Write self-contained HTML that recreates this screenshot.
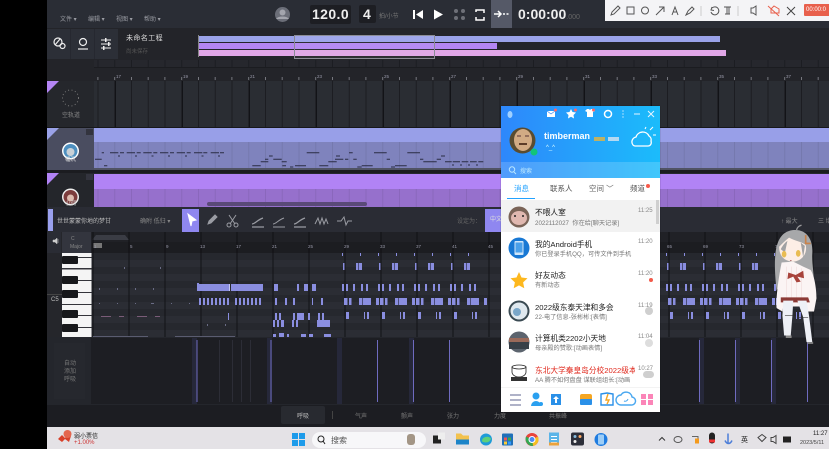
<!DOCTYPE html>
<html><head><meta charset="utf-8"><style>
html,body{margin:0;padding:0;background:#000}
#p{position:relative;width:829px;height:449px;overflow:hidden;background:#000;font-family:"Liberation Sans","Noto Sans CJK SC",sans-serif;color:#aaa;filter:blur(.35px)}
.a{position:absolute;white-space:nowrap}
svg{position:absolute;overflow:visible}
.m{font-size:6px;color:#9a9ca3;top:14px}
.q{position:absolute;left:34px;font-size:7.700px;color:#222;white-space:nowrap}
.s{position:absolute;left:34px;font-size:6.200px;color:#777;white-space:nowrap}
.t{position:absolute;left:137px;font-size:6px;color:#888}
.r{font-size:4.500px;color:#99a;top:244px}
</style></head><body><div id="p">
<div class="a" style="left:47px;top:0;width:782px;height:28px;background:#2a2d35"></div>
<div class="a m" style="left:60px">文件 ▾</div><div class="a m" style="left:88px">编辑 ▾</div><div class="a m" style="left:116px">视图 ▾</div><div class="a m" style="left:144px">帮助 ▾</div>
<svg style="left:0;top:0" width="829" height="28"><circle cx="282.500" cy="14.500" r="7.500" fill="#6b6e78"/><circle cx="282.500" cy="12.500" r="3" fill="#a3a5ad"/><path d="M276 19a7 4 0 0 1 13 0z" fill="#a3a5ad"/>
<rect x="310" y="5" width="41" height="19" rx="2" fill="#1d1e23"/><rect x="359" y="5" width="17" height="18" rx="2" fill="#1d1e23"/><rect x="491" y="0" width="21" height="28" fill="#555967"/>
<path d="M413 10h2v9h-2zM423 10v9l-7-4.500z" fill="#fff"/><path d="M434 9.500l9 5-9 5z" fill="#fff"/>
<g fill="#6e7078"><circle cx="456" cy="11" r="2"/><circle cx="463" cy="11" r="2"/><circle cx="456" cy="18" r="2"/><circle cx="463" cy="18" r="2"/></g>
<path d="M476 12v-2h8v3M484 17v3h-8v-3" fill="none" stroke="#fff" stroke-width="1.500"/><path d="M494 14h6M498 11l3 3-3 3" fill="none" stroke="#fff" stroke-width="1.500"/><path d="M503 14h6" stroke="#fff" stroke-width="1.500" stroke-dasharray="2 1.500"/></svg>
<div class="a" style="left:312px;top:6px;font-size:14px;font-weight:bold;color:#eee;letter-spacing:.4px">120.0</div>
<div class="a" style="left:363px;top:6px;font-size:14px;font-weight:bold;color:#eee">4</div>
<div class="a" style="left:379px;top:11px;font-size:6px;color:#777">拍/小节</div>
<div class="a" style="left:518px;top:6px;font-size:14px;font-weight:bold;color:#eee">0:00:00<span style="font-size:7px;font-weight:normal;color:#666">.000</span></div>

<div class="a" style="left:605px;top:0;width:224px;height:21px;background:#f4f4f6"></div>
<svg style="left:605px;top:0" width="224" height="21" fill="none" stroke="#555" stroke-width="1"><path d="M6 15l1-3 6-6 2 2-6 6z"/><rect x="22" y="7" width="7" height="7"/><circle cx="40" cy="10.500" r="3.500"/><path d="M51 15l8-8M54 7h5v5"/><path d="M67 15l3-8 3 8M68.500 12h3"/><path d="M81 15l2-4 4-4 2 2-4 4z"/><path d="M107 7l-1 3 3 .5M107 8a4 4 0 1 1-1 4"/><path d="M119 7h7M120 14h5M122 7v7M124 7v7"/><path d="M96 6v10M133 6v10" stroke="#ccc"/><path d="M146 8h2l3-2v9l-3-2h-2z"/><path d="M169 6l-3 3v4h8V9zM163 6l11 10" stroke="#e8604c"/><path d="M182 7l8 8M190 7l-8 8" stroke="#444"/></svg>
<div class="a" style="left:804px;top:4px;width:25px;height:12px;background:#e8604c;color:#fff;font-size:6px;line-height:12px;padding-left:2px;border-radius:1px 0 0 1px">00:00:0</div>

<div class="a" style="left:47px;top:28px;width:782px;height:32px;background:#232429"></div>
<div class="a" style="left:47px;top:29px;width:71px;height:30px;background:#2c2f37"></div>
<svg style="left:47px;top:29px" width="71" height="30"><path d="M23.500 0v30M47.500 0v30" stroke="#262830"/>
<g fill="none" stroke="#eee" stroke-width="1.200"><circle cx="11" cy="13" r="4"/><circle cx="15.500" cy="17" r="2.500"/><path d="M8 16l5-6"/><circle cx="36" cy="13" r="3.500"/><path d="M31 20h10"/><path d="M54 11h10M54 15h10M54 19h10" stroke-width="1"/></g><g fill="#eee"><rect x="58" y="9" width="1.500" height="4"/><rect x="61" y="13" width="1.500" height="4"/><rect x="56" y="17" width="1.500" height="4"/></g></svg>
<div class="a" style="left:126px;top:33px;font-size:7px;color:#ddd;letter-spacing:.4px">未命名工程</div>
<div class="a" style="left:126px;top:47px;font-size:5.500px;color:#555">尚未保存</div>
<div class="a" style="left:198px;top:36px;width:522px;height:6px;background:#9aa2e8"></div>
<div class="a" style="left:198px;top:43px;width:299px;height:6px;background:#b386f2"></div>
<div class="a" style="left:198px;top:50px;width:528px;height:6px;background:#e0a6e6"></div>
<div class="a" style="left:294px;top:35px;width:139px;height:22px;border:1px solid #8b8c96;background:rgba(255,255,255,.05)"></div>
<div class="a" style="left:198px;top:35px;width:1px;height:22px;background:#888"></div>

<svg style="left:47px;top:60px" width="782" height="148">
<defs>
<pattern id="g" x="50.500" y="0" width="16.750" height="200" patternUnits="userSpaceOnUse"><rect x="0" width="1" height="200" fill="#1c1d22"/></pattern>
<pattern id="gb" x="1" y="0" width="67" height="200" patternUnits="userSpaceOnUse"><rect width="1" height="200" fill="#121317"/></pattern>
<pattern id="gl" x="50.500" y="0" width="16.750" height="200" patternUnits="userSpaceOnUse"><rect width="1" height="200" fill="#000" opacity=".08"/></pattern>
<pattern id="tk" x="50.500" y="0" width="16.750" height="3" patternUnits="userSpaceOnUse"><rect width=".8" height="3" fill="#8a8b92"/></pattern>
</defs>
<rect width="782" height="8" fill="#26272d"/><rect y="8" width="782" height="13" fill="#232429"/><rect x="47" y="7" width="735" height="1" fill="#1b1c20"/><rect width="47" height="21" fill="#232429"/>
<rect x="47" y="0" width="735" height="7" fill="url(#g)"/>
<rect x="47" y="17" width="735" height="3" fill="url(#tk)"/>
<rect y="21" width="782" height="107" fill="#26292f"/><rect x="47" y="21" width="735" height="46" fill="#2a2d33"/>
<rect x="50" y="21" width="732" height="46" fill="url(#g)"/><rect x="47" y="21" width="735" height="46" fill="url(#gb)"/>
<rect x="0" y="21" width="47" height="46" fill="#25272c"/>
<path d="M0 21h12L0 33z" fill="#b485f5"/>
<circle cx="23.500" cy="38" r="8" fill="none" stroke="#777" stroke-dasharray="1 2.500"/>
<rect y="67" width="782" height="3" fill="#17181b"/>
<rect y="68" width="47" height="45" fill="#4a4d60"/><path d="M0 68h12L0 80z" fill="#9aa2e8"/>
<rect x="47" y="68" width="735" height="14" fill="#989fe8"/><rect x="47" y="82" width="735" height="26" fill="#7f83bd"/><rect x="47" y="82" width="735" height="26" fill="url(#gl)"/>
<rect x="47" y="108" width="735" height="2" fill="#505363"/>
<rect y="110" width="782" height="3" fill="#1b1c20"/>
<rect y="113" width="47" height="35" fill="#24262b"/><path d="M0 113h12L0 125z" fill="#b183f5"/>
<rect x="47" y="114" width="735" height="15" fill="#b183f5"/><rect x="47" y="129" width="735" height="19" fill="#9670cc"/><rect x="47" y="129" width="735" height="19" fill="url(#gl)"/>
<rect x="160" y="142" width="160" height="4" rx="2" fill="#5a4a78"/>
<rect x="39" y="69" width="7" height="6" fill="#33343e"/><rect x="39" y="114" width="7" height="6" fill="#33343e"/>
<circle cx="23.500" cy="91" r="8.500" fill="#fff"/><circle cx="23.500" cy="91" r="7" fill="#4e8fbf"/><circle cx="23.500" cy="92" r="4" fill="#c9d0d6"/>
<circle cx="23.500" cy="137" r="8.500" fill="#eee"/><circle cx="23.500" cy="137" r="7" fill="#7c3c3c"/><circle cx="23.500" cy="138" r="3.500" fill="#dcbcb0"/>
<path stroke="#2a2c44" stroke-width="1" fill="none" d="M54.700 92.700H57M63 92.700H71.300M73 92.700H77M79.700 92.700H88M89.700 92.700H93.700M96.300 92.700H104.700M106.300 92.700H110.300M113 92.700H121.300M123 92.700H127M129.700 92.700H138M139.700 92.700H143.700M147 92.700H155.300M156.300 92.700H160.300M163.700 92.700H172M173 92.700H177M259.700 92.700H272.300M302 92.700H305.700M327 92.700H339.700M360.300 92.700H373
M71 96H73M88 96H90M104.500 96H106.500M121 96H123M138 96H140M154.500 96H156.500M171 96H173M222 96H225.700M289 96H293M394 96H398
M48 99.300H54.700M218 99.300H221.300M226.300 99.300H234.700M288 99.300H296.300M298 99.300H301.300M306.300 99.300H309.700M339.700 99.300H343M373 99.300H376.300M389.700 99.300H394
M213.700 101.700H221.300M234.700 101.700H239.700M281.300 101.700H289.700M376.300 101.700H389.700M398 101.700H404.700M405.700 101.700H413M414.700 101.700H421.300M423 101.700H429.700M431.300 101.700H436.300
M57 105.700H60.300M205.300 105.700H213.700M235.300 105.700H239M248 105.700H259M272.300 105.700H281.300M314.700 105.700H325.700M348 105.700H359.700M405 105H407M413 105H415M421 105H423M429 105H431
M243 107H246.300M310.300 107H314.700M344 107H348"/>
</svg>
<div class="a" style="left:62px;top:110px;font-size:6px;color:#888">空轨道</div>
<div class="a" style="left:65px;top:155px;font-size:5.500px;color:#ddd">幅沉</div>
<div class="a" style="left:65px;top:202px;font-size:5.500px;color:#ccc;line-height:5px">小调</div>
<div class="a r" style="left:116px;top:74px">17</div><div class="a r" style="left:183px;top:74px">19</div><div class="a r" style="left:250px;top:74px">21</div><div class="a r" style="left:317px;top:74px">23</div><div class="a r" style="left:384px;top:74px">25</div><div class="a r" style="left:451px;top:74px">27</div><div class="a r" style="left:518px;top:74px">29</div><div class="a r" style="left:585px;top:74px">31</div><div class="a r" style="left:652px;top:74px">33</div><div class="a r" style="left:719px;top:74px">35</div><div class="a r" style="left:786px;top:74px">37</div>

<!-- Toolbar -->
<div class="a" style="left:47px;top:207px;width:782px;height:25px;background:#2a2c34"></div>
<div class="a" style="left:48px;top:209px;width:5px;height:22px;background:#9aa0ee"></div>
<div class="a" style="left:57px;top:216px;font-size:6px;color:#bbb">世世蒙蒙你地的梦甘</div>
<div class="a" style="left:140px;top:216px;font-size:6px;color:#888">确附 低归 ▾</div>
<div class="a" style="left:182px;top:209px;width:17px;height:23px;background:#8f87f0"></div>
<svg style="left:180px;top:207px" width="180" height="25" fill="none" stroke="#9a9ca3" stroke-width="1"><path d="M8 7l8 6-4 1-1 5z" fill="#fff" stroke="#fff"/><path d="M28 17l1-3 6-6 2 2-6 6z" fill="#9a9ca3"/><path d="M49 8l6 9M56 8l-6 9"/><circle cx="49" cy="18" r="2"/><circle cx="56" cy="18" r="2"/><path d="M72 17c3 0 5-4 11-6M72 20h12" stroke-width="1.200"/><path d="M93 17c3 0 5-4 11-6M93 20h12"/><path d="M114 17c3 0 5-4 11-6M114 20h12" stroke-width="1.200"/><path d="M135 17l3-6 2 6 2-6 2 6 2-5 2 5"/><path d="M157 14h4l3-4 2 8 2-4h4"/></svg>
<div class="a" style="left:457px;top:216px;font-size:6px;color:#666">设定为：</div>
<div class="a" style="left:485px;top:209px;width:30px;height:23px;background:#8f87f0;color:#ddd;font-size:6px;line-height:23px;padding-left:5px">中文</div>
<div class="a" style="left:781px;top:216px;font-size:6px;color:#888">↑ 最大</div><div class="a" style="left:818px;top:216px;font-size:6px;color:#888">三 增</div>

<!-- Piano roll -->
<svg style="left:47px;top:232px" width="782" height="106">
<defs>
<pattern id="rows" x="0" y="0" width="10" height="28" patternUnits="userSpaceOnUse"><rect width="10" height="28" fill="#26282e"/><rect y="0" width="10" height="7" fill="#2b2d34"/><rect y="14" width="10" height="7" fill="#2b2d34"/></pattern>
<pattern id="bars" x="45.500" y="0" width="36" height="106" patternUnits="userSpaceOnUse"><rect width="1" height="106" fill="#0d0e11"/></pattern>
<g id="ph" fill="#8a8ee0">
<rect x="0" y="21" width="1" height="3"/><rect x="18" y="21" width="1" height="3"/>
<rect x="1" y="31" width="1.500" height="7"/><rect x="14" y="31" width="6" height="7"/><rect x="16" y="31" width="1" height="7" fill="#4a4c78"/>
<rect x="0" y="52" width="2" height="7"/><rect x="4" y="52" width="2" height="7"/><rect x="11" y="52" width="2" height="7"/><rect x="19" y="52" width="2" height="7"/><rect x="24" y="52" width="2" height="7"/>
<rect x="2" y="66" width="3.500" height="7"/><rect x="7" y="66" width="2.500" height="7"/><rect x="17" y="66" width="12" height="7"/><rect x="20" y="66" width="1" height="7" fill="#4a4c78"/><rect x="34" y="66" width="3" height="7"/>
<rect x="4" y="80" width="3" height="7"/><rect x="25" y="80" width="2" height="7"/><rect x="22" y="80" width="1" height="7"/>
</g>
</defs>
<rect width="782" height="106" fill="#1e1f24"/>
<rect x="44" y="0" width="738" height="10" fill="#202126"/><rect x="45" y="10" width="737" height="11" fill="#1c1d21"/>
<path d="M45 8l4-5h29l4 5z" fill="#3a3c44"/>
<rect x="0" y="0" width="15" height="106" fill="#25262b"/>
<rect x="15" y="0" width="29" height="21" fill="#33353e"/>
<rect x="0" y="0" width="14" height="21" fill="#2a2c34"/>
<rect x="46" y="11" width="9" height="5" fill="#777"/>
<path d="M6 8h2l2-2v6l-2-2H6zM11 7v4" fill="#ccc" stroke="#ccc" stroke-width=".5"/>
<rect x="44" y="21" width="738" height="85" fill="url(#rows)"/>
<rect x="45" y="0" width="737" height="106" fill="url(#bars)" opacity=".85"/>
<rect x="0" y="62" width="15" height="1" fill="#444"/>
<g fill="#8a8ee0">
<rect x="150" y="51" width="2" height="8"/><rect x="150" y="52" width="32" height="7"/><rect x="182" y="52" width="1" height="7" fill="#c5c8f2"/><rect x="184" y="52" width="32" height="7"/>
<rect x="152" y="66" width="2" height="7"/><rect x="156" y="66" width="2" height="7"/><rect x="160" y="66" width="2" height="7"/><rect x="164" y="66" width="2" height="7"/><rect x="168" y="66" width="2" height="7"/><rect x="172" y="66" width="2" height="7"/><rect x="176" y="66" width="2" height="7"/><rect x="180" y="66" width="2" height="7"/><rect x="188" y="66" width="2" height="7"/><rect x="192" y="66" width="2" height="7"/><rect x="196" y="66" width="2" height="7"/><rect x="200" y="66" width="2" height="7"/><rect x="204" y="66" width="2" height="7"/><rect x="208" y="66" width="2" height="7"/><rect x="212" y="66" width="2" height="7"/>
<rect x="181" y="81" width="1" height="7"/>
<rect x="227" y="52" width="4" height="7"/><rect x="250" y="52" width="2" height="7"/><rect x="257" y="52" width="4" height="7"/><rect x="265" y="52" width="4" height="7"/>
<rect x="228" y="66" width="2" height="7"/><rect x="238" y="66" width="2" height="7"/><rect x="246" y="66" width="2" height="7"/><rect x="265" y="66" width="1" height="7"/><rect x="274" y="66" width="2" height="7"/>
<rect x="228" y="81" width="2" height="7"/><rect x="232" y="81" width="2" height="7"/><rect x="246" y="81" width="2" height="7"/><rect x="250" y="81" width="7" height="7"/><rect x="261" y="81" width="2" height="7"/><rect x="271" y="81" width="2" height="7"/><rect x="275" y="81" width="2" height="7"/>
<rect x="226" y="88" width="2" height="7"/><rect x="230" y="88" width="2" height="7"/><rect x="234" y="88" width="3" height="7"/><rect x="245" y="88" width="2" height="7"/><rect x="249" y="88" width="2" height="7"/><rect x="271" y="88" width="12" height="7"/><rect x="270" y="88" width="1" height="7"/>
<rect x="226" y="102" width="3" height="4"/><rect x="232" y="101" width="5" height="5"/><rect x="240" y="102" width="2" height="4"/><rect x="254" y="102" width="5" height="4"/><rect x="262" y="102" width="4" height="4"/><rect x="277" y="102" width="7" height="4"/>
</g>
<g fill="#6a6c85"><rect x="77" y="35" width="1" height="2"/><rect x="113" y="35" width="1" height="2"/><rect x="52" y="56" width="1" height="2"/><rect x="70" y="56" width="1" height="2"/><rect x="88" y="56" width="1" height="2"/><rect x="106" y="56" width="1" height="2"/><rect x="52" y="71" width="1" height="1"/><rect x="70" y="71" width="1" height="1"/><rect x="88" y="71" width="1" height="1"/><rect x="104" y="71" width="3" height="1"/><rect x="124" y="71" width="1" height="1"/><rect x="142" y="71" width="1" height="1"/><rect x="160" y="92" width="1" height="2"/><rect x="178" y="92" width="1" height="2"/></g>
<g fill="#7a5c78"><rect x="54" y="84" width="10" height="1"/><rect x="72" y="84" width="5" height="1"/><rect x="90" y="84" width="10" height="1"/><rect x="108" y="84" width="5" height="1"/></g>
<g fill="#5a5c70"><rect x="46" y="104" width="55" height="1"/><rect x="128" y="104" width="60" height="1"/></g>
<use href="#ph" x="295"/><use href="#ph" x="331"/><use href="#ph" x="367"/><use href="#ph" x="403"/>
<use href="#ph" x="619"/><use href="#ph" x="655"/><use href="#ph" x="691"/><use href="#ph" x="727"/>
</svg>
<div class="a" style="left:71px;top:236px;font-size:5px;color:#888">C</div><div class="a" style="left:70px;top:244px;font-size:5px;color:#888">Major</div>
<div class="a r" style="left:94px">1</div><div class="a r" style="left:130px">5</div><div class="a r" style="left:166px">9</div><div class="a r" style="left:200px">13</div><div class="a r" style="left:236px">17</div><div class="a r" style="left:272px">21</div><div class="a r" style="left:308px">25</div><div class="a r" style="left:344px">29</div><div class="a r" style="left:380px">33</div><div class="a r" style="left:416px">37</div><div class="a r" style="left:452px">41</div><div class="a r" style="left:488px">45</div><div class="a r" style="left:667px">65</div><div class="a r" style="left:703px">69</div><div class="a r" style="left:739px">73</div><div class="a r" style="left:775px">77</div>
<div class="a" style="left:51px;top:297px;font-size:6px;color:#bbb">C5</div>

<svg style="left:62px;top:253px" width="30" height="84"><rect width="29.500" height="84" fill="#f4f4f4"/><g fill="#33343a"><rect x="16" y="4" width="13.500" height="1"/><rect y="15" width="29.500" height="1.500"/><rect x="16" y="27" width="13.500" height="1"/><rect x="16" y="39" width="13.500" height="1"/><rect y="51" width="29.500" height="1"/><rect x="16" y="62" width="13.500" height="1"/><rect x="16" y="74" width="13.500" height="1"/></g>
<g fill="#17181b"><rect y="3" width="16" height="8" rx="1"/><rect y="23" width="16" height="8" rx="1"/><rect y="37" width="16" height="8" rx="1"/><rect y="57" width="16" height="8" rx="1"/><rect y="71" width="16" height="8" rx="1"/></g></svg>

<!-- Automation -->
<svg style="left:47px;top:337px" width="782" height="90">
<rect width="782" height="68" fill="#24262c"/><rect x="44" y="1" width="738" height="66" fill="#1d1e23"/>
<g fill="#26283a"><rect x="145" y="1" width="5" height="66"/><rect x="220" y="1" width="5" height="66"/><rect x="290" y="1" width="5" height="66"/><rect x="362" y="1" width="5" height="66"/><rect x="652" y="1" width="5" height="66"/><rect x="688" y="1" width="5" height="66"/><rect x="724" y="1" width="5" height="66"/></g>
<g fill="#6f6bc0"><rect x="149.500" y="3" width="1" height="62"/><rect x="223.500" y="3" width="1" height="62"/><rect x="330" y="3" width="1" height="62"/><rect x="366" y="3" width="1" height="62"/><rect x="402" y="3" width="1" height="62"/><rect x="652" y="3" width="1" height="62"/><rect x="688" y="3" width="1" height="62"/><rect x="724" y="3" width="1" height="62"/><rect x="760" y="3" width="1" height="62"/></g>
<g fill="#2c2d36"><rect x="172" y="3" width="1" height="62"/><rect x="185" y="3" width="1" height="62"/><rect x="194" y="3" width="1" height="62"/><rect x="203" y="3" width="1" height="62"/></g>
<rect x="7" y="6" width="31" height="56" fill="#26282e"/>
<rect y="68" width="782" height="22" fill="#1c1d22"/><rect x="234" y="69" width="44" height="18" rx="2" fill="#282a30"/><rect x="285" y="74" width="1" height="8" fill="#444"/></svg>
<div class="a" style="left:63px;top:360px;width:14px;font-size:6px;line-height:8px;color:#777;white-space:normal;text-align:center">自动添加呼吸</div>
<div class="a" style="left:297px;top:411px;font-size:6px;color:#bbb">呼吸</div><div class="a" style="left:355px;top:411px;font-size:6px;color:#777">气声</div><div class="a" style="left:401px;top:411px;font-size:6px;color:#777">颤声</div><div class="a" style="left:447px;top:411px;font-size:6px;color:#777">张力</div><div class="a" style="left:494px;top:411px;font-size:6px;color:#777">力度</div><div class="a" style="left:549px;top:411px;font-size:6px;color:#777">共振峰</div>

<!-- Taskbar -->
<div class="a" style="left:47px;top:427px;width:782px;height:22px;background:#e4e2e6"></div>
<svg style="left:47px;top:427px" width="782" height="22">
<path d="M11 12l4-4 3 3 3-5 3 3-2 6-4-3-3 3z" fill="#d8402a"/><circle cx="20.500" cy="7" r="4" fill="#e4664e"/>
<g fill="#1d9bea"><rect x="245" y="6" width="6" height="6"/><rect x="252" y="6" width="6" height="6"/><rect x="245" y="13" width="6" height="6"/><rect x="252" y="13" width="6" height="6"/></g>
<rect x="265" y="5" width="114" height="16" rx="8" fill="#f7f7f9"/><circle cx="274" cy="12" r="3" fill="none" stroke="#222"/><path d="M276 14l2 3" stroke="#222"/>
<rect x="360" y="7" width="8" height="11" rx="3" fill="#a39686"/>
<g transform="translate(0,1.500)">
<rect x="386" y="7" width="8" height="8" fill="#222"/><rect x="391" y="4" width="7" height="7" fill="#eee"/>
<path d="M409 5h5l2 2h6v4h-13z" fill="#f2c14e"/><rect x="409" y="10" width="13" height="6" fill="#1d84c8"/><rect x="409" y="9" width="13" height="2" fill="#f2c14e"/>
<circle cx="439" cy="11" r="6" fill="#1f9bd8"/><path d="M435 13a5 4 0 0 1 9-3c-1 4-5 5-9 3z" fill="#5fd07a"/>
<rect x="455" y="5" width="11" height="12" rx="1" fill="#1f6fb8"/><rect x="457" y="9" width="3" height="3" fill="#e55"/><rect x="461" y="9" width="3" height="3" fill="#4a4"/><rect x="457" y="13" width="3" height="3" fill="#fc3"/><rect x="461" y="13" width="3" height="3" fill="#39f"/>
<circle cx="485" cy="11" r="6.500" fill="#e44"/><path d="M485 11L479 8a7 7 0 0 1 11-1z" fill="#e8453c"/><path d="M485 11l6-3a7 7 0 0 1-5 9.500z" fill="#f4c020"/><path d="M485 11l1 6.500a7 7 0 0 1-7-9.500z" fill="#34a853"/><circle cx="485" cy="11" r="3" fill="#4a8af4" stroke="#fff"/>
<rect x="502" y="4" width="10" height="13" fill="#5bb4e8"/><path d="M504 8h6M504 11h6M504 14h6" stroke="#fff"/><rect x="502" y="14" width="10" height="3" fill="#eaa23c"/>
<rect x="524" y="4" width="13" height="13" rx="2" fill="#2d2f3a"/><circle cx="528" cy="8" r="1.500" fill="#8bd"/><circle cx="533" cy="8" r="1.500" fill="#fa6"/><circle cx="528" cy="13" r="1.500" fill="#eee"/>
<circle cx="554" cy="11" r="6.500" fill="#1e7be0"/><rect x="551" y="6" width="6" height="10" rx="1" fill="#9dcdf6"/>
<path d="M612 12l3-3 3 3" fill="none" stroke="#333"/><ellipse cx="631" cy="11" rx="4" ry="3" fill="none" stroke="#555"/><path d="M645 8h6v3" fill="none" stroke="#666"/><rect x="648" y="10" width="4" height="5" fill="#f49a1c"/>
<path d="M662 7a3 3 0 0 1 6 0v5a3 3 0 0 1-6 0z" fill="#222"/><path d="M662 11h6v3h-6z" fill="#e33"/>
<path d="M681 5v10M678 12c2 4 5 4 7 0" stroke="#4d7ed8" stroke-width="1.500" fill="none"/>
<path d="M711 9l4-3 4 3-4 4z" fill="none" stroke="#444"/><path d="M724 9h2l3-2v8l-3-2h-2z" fill="none" stroke="#444"/><rect x="736" y="8" width="8" height="6" fill="#222"/>
</g>
</svg>
<div class="a" style="left:74px;top:431px;font-size:6px;color:#222">弱小票信</div>
<div class="a" style="left:74px;top:440px;font-size:6px;color:#c33">+1.00%</div>
<div class="a" style="left:331px;top:435px;font-size:8px;color:#555">搜索</div>
<div class="a" style="left:741px;top:435px;font-size:7px;color:#222">英</div>
<div class="a" style="left:813px;top:431px;font-size:6px;color:#222">11:27</div>
<div class="a" style="left:800px;top:440px;font-size:5.500px;color:#444">2023/5/11</div>

<!-- QQ -->
<div class="a" style="left:501px;top:106px;width:159px;height:306px;background:#fff;box-shadow:0 0 1px #0006;overflow:hidden">
<div class="a" style="left:0;top:0;width:159px;height:72px;background:linear-gradient(90deg,#2e87fb,#1bbcfb)"></div>
<div class="a" style="left:0;top:56px;width:159px;height:16px;background:rgba(255,255,255,.17)"></div>
<svg style="left:0;top:0" width="159" height="72" fill="none"><ellipse cx="9" cy="8.500" rx="2.500" ry="3.500" fill="#9fd0ff"/><rect x="46" y="5" width="8" height="6" fill="#fff"/><path d="M46 5l4 3 4-3" stroke="#2e87fb" stroke-width=".6"/><path d="M70 3l1.500 3 3.500.5-2.500 2.500.5 3.500-3-1.700-3 1.700.5-3.500-2.500-2.500 3.500-.5z" fill="#fff"/><path d="M84 5l2-2h2l1 1 1-1h2l2 2-2 1v5h-6V6z" fill="#fff"/><circle cx="107" cy="8" r="3.500" stroke="#fff" stroke-width="1.500"/><circle cx="122" cy="5" r=".6" fill="#fff"/><circle cx="122" cy="8" r=".6" fill="#fff"/><circle cx="122" cy="11" r=".6" fill="#fff"/><path d="M133 8h6M147 5l6 6M153 5l-6 6" stroke="#e6f4ff"/>
<circle cx="54.500" cy="4" r="1.500" fill="#f66"/><circle cx="74.500" cy="4" r="1.500" fill="#f66"/><circle cx="92.500" cy="4" r="1.500" fill="#f66"/>
<circle cx="21.500" cy="34.500" r="13" fill="#5a4c30"/><ellipse cx="22" cy="34" rx="9" ry="11" fill="#d2ab84"/><path d="M18 38h8" stroke="#5c3c28" stroke-width="2"/><path d="M16 30h4M24 30h4" stroke="#533" /><circle cx="33" cy="46" r="3.500" fill="#12c47a"/>
<g transform="translate(0,8)"><path d="M132 31a5 5 0 0 1 3-8 7 7 0 0 1 13-1 4.500 4.500 0 0 1 2 5c1 3-1 5-3 5h-13a3 3 0 0 1-2-1z" stroke="#fff" stroke-width="1.300"/><path d="M144 15l1-2M149 16l3-3M152 21h3" stroke="#fff"/></g>
<circle cx="11" cy="63.500" r="2.700" stroke="#b9e6ff"/><path d="M13 66l2 2" stroke="#b9e6ff"/><rect x="93" y="31" width="11" height="4" fill="#e5b43f" opacity=".8"/><rect x="107" y="31" width="11" height="4" fill="#cfe0f0" opacity=".85"/></svg>
<div class="a" style="left:43px;top:25px;font-size:9px;font-weight:bold;color:#fff">timberman</div>
<div class="a" style="left:45px;top:39px;font-size:6px;color:#dff">^_^</div>
<div class="a" style="left:19px;top:60px;font-size:6px;color:#bde8ff">搜索</div>
<div class="a" style="left:13px;top:77px;font-size:7.500px;color:#22a2ff">消息</div>
<div class="a" style="left:49px;top:77px;font-size:7.500px;color:#555">联系人</div>
<div class="a" style="left:88px;top:77px;font-size:7.500px;color:#666">空间 ﹀</div>
<div class="a" style="left:129px;top:77px;font-size:7.500px;color:#555">频道</div>
<div class="a" style="left:145px;top:78px;width:4px;height:4px;border-radius:50%;background:#f65a4a"></div>
<div class="a" style="left:6px;top:92px;width:28px;height:1px;background:#22a2ff"></div>
<div class="a" style="left:0;top:94px;width:159px;height:32px;background:#f2f2f2"></div>
<div class="a" style="left:155px;top:94px;width:3px;height:24px;background:#cfcfcf"></div>
<svg style="left:0;top:93px" width="159" height="190">
<circle cx="18" cy="18" r="10.500" fill="#7a6458"/><ellipse cx="18" cy="19" rx="8" ry="7" fill="#e0b8b0"/><circle cx="14" cy="17" r="1" fill="#222"/><circle cx="22" cy="17" r="1" fill="#222"/>
<circle cx="18" cy="49" r="10.500" fill="#1878d4"/><rect x="13.500" y="42" width="9" height="14" rx="1" fill="#cfe6fa"/><rect x="14.500" y="43.500" width="7" height="10" fill="#4aa0ea"/>
<path d="M18 73l2.500 5.500 6 .8-4.400 4.100 1.200 5.900-5.300-2.900-5.300 2.900 1.200-5.900-4.400-4.100 6-.8z" fill="#fdb81e"/>
<circle cx="18" cy="112" r="10.500" fill="#3a4a52"/><circle cx="18" cy="112" r="8.500" fill="#dfe8ee"/><circle cx="16" cy="113" r="4" fill="#7aa7c9"/>
<circle cx="18" cy="143" r="10.500" fill="#5c646e"/><rect x="8" y="139" width="20" height="4" fill="#9a6a5a"/><rect x="8" y="143" width="20" height="7" fill="#384048"/>
<path d="M11 168h14v5a7 5 0 0 1-14 0z" stroke="#222" stroke-width=".8" fill="#fff"/><ellipse cx="18" cy="168" rx="7" ry="2" stroke="#222" stroke-width=".8" fill="#fff"/><rect x="10" y="178" width="16" height="4" fill="#333"/>
<circle cx="150" cy="81" r="2" fill="#f25a4a"/><circle cx="148" cy="112" r="4" fill="#cfcfcf"/><circle cx="148" cy="144" r="4" fill="#ddd"/><rect x="142" y="172" width="11" height="7" rx="3.500" fill="#cfcfcf"/></svg>
<div class="q" style="top:101px;color:#111">不喂人室</div>
<div class="s" style="top:112px">2022112027&nbsp; 你在给[聊天记录]</div>
<div class="q" style="top:133px">我的Android手机</div>
<div class="s" style="top:143px">你已登录手机QQ，可传文件到手机</div>
<div class="q" style="top:164px">好友动态</div>
<div class="s" style="top:174px">有新动态</div>
<div class="q" style="top:196px">2022级东泰天津和多会</div>
<div class="s" style="top:206px">22-电了信息-张彬彬:[表情]</div>
<div class="q" style="top:227px">计算机类2202小天地</div>
<div class="s" style="top:237px">母亲殿的赞歌:[动画表情]</div>
<div class="q" style="top:259px;color:#e0281c;width:100px;overflow:hidden">东北大学秦皇岛分校2022级本</div>
<div class="s" style="top:269px;width:100px;overflow:hidden">AA 腾不如何盘盘 谋联组组长:[动画</div>
<div class="t" style="top:102px">11:25</div>
<div class="t" style="top:133px">11:20</div><div class="t" style="top:165px">11:20</div><div class="t" style="top:197px">11:19</div><div class="t" style="top:228px">11:04</div><div class="t" style="top:260px">10:27</div>
<svg style="left:0;top:281px" width="159" height="25"><rect width="159" height=".7" fill="#eee"/>
<path d="M9 8h11M9 13h11M9 18h11" stroke="#7f84a8" stroke-width="1.200"/>
<circle cx="35" cy="9" r="3.500" fill="#2aa0f0"/><path d="M30 19a5 5 0 0 1 10 0z" fill="#2aa0f0"/><circle cx="40" cy="17" r="2" fill="#2aa0f0"/>
<path d="M50 7h10v11H50z" fill="#2a90e8"/><path d="M55 9l3 3h-2v4h-2v-4h-2z" fill="#fff"/>
<rect x="79" y="7" width="12" height="10" rx="2" fill="#f5a623"/><rect x="79" y="12" width="12" height="6" rx="1" fill="#2a90e8"/>
<path d="M100 7l6-1 6 1v11h-12z" fill="none" stroke="#2a90e8" stroke-width="1.400"/><path d="M107 7l-2 6h3l-2 4" stroke="#f5a623" stroke-width="1.400" fill="none"/>
<path d="M120 18a5 5 0 0 1 0-10 6 6 0 0 1 11 2 4 4 0 0 1-1 8z" fill="none" stroke="#4aa8f0" stroke-width="1.400"/><path d="M123 14a3 3 0 0 0 4-2" stroke="#4aa8f0" fill="none"/>
<g fill="#fb85b8"><rect x="140" y="7" width="5" height="5"/><rect x="147" y="7" width="5" height="5"/><rect x="140" y="13" width="5" height="5"/><rect x="147" y="13" width="5" height="5"/></g></svg>
</div>

<!-- Character -->
<svg style="left:770px;top:221px" width="59" height="130">
<g transform="scale(.83)">
<path d="M32 11c1-4 3-5 6-6" fill="none" stroke="#9a9a9c" stroke-width="1.500"/>
<path d="M8 84C3 40 6 14 27 11c18-2 25 12 24 28-1 10 3 30 2 45l-8-8L14 70z" fill="#a7a8aa"/>
<rect x="42" y="17" width="2" height="10" fill="#c9824a"/><rect x="42" y="26" width="7" height="2" fill="#c9824a"/>
<path d="M11 31c4-4 8-8 12-11 7 4 16 5 20 9 2 8-2 18-14 20-12 0-18-7-18-18z" fill="#fdeee6"/>
<path d="M13 34c2-4 5-8 8-10l-3 14zM42 30l-2 14-3-18z" fill="#a0a1a3"/>
<ellipse cx="17" cy="40" rx="2.800" ry="4" fill="#e9bc52"/><ellipse cx="34" cy="39" rx="2.800" ry="4" fill="#e9bc52"/><rect x="24" y="47" width="2" height="1" fill="#a66"/>
<path d="M14 50l14-1 12 6 9 4c5 8 7 24 7 34l-3 16H38l-1-6H16l-1 6-7-4c-1-8 1-30 6-55z" fill="#fbf4f4"/>
<path d="M20 55v40M26 55v40M32 55v40M38 57v38" stroke="#eed6d6" stroke-width=".6"/>
<path d="M22 62l9 3 9-5 1 9-8-2 4 6-5 1-4-7-7 3z" fill="#a8433c"/>
<path d="M13 92h33l2 6H13z" fill="#8c3a36"/>
<path d="M16 96h12l-1 18-2 24h-8l-2-24z" fill="#eef0f6"/><path d="M33 96h11l3 18 4 32h-7l-4-30z" fill="#eef0f6"/>
<path d="M18 114h10" stroke="#333" stroke-width=".7"/><path d="M34 116h12" stroke="#333" stroke-width=".7"/>
<path d="M19 138h7v3h-7zM45 146h7v2h-7z" fill="#888"/>
</g>
</svg>
</div></body></html>
